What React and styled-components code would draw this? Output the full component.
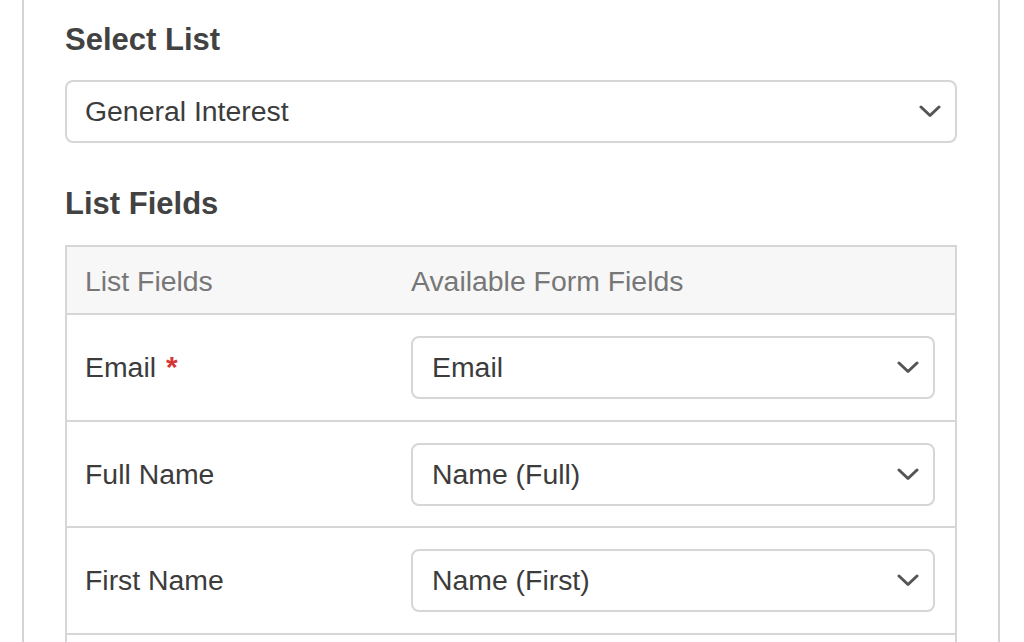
import React from "react";
import styled, { createGlobalStyle } from "styled-components";

const Global = createGlobalStyle`
  html, body { margin: 0; padding: 0; background: #ffffff; overflow: hidden; }
  body { font-family: "Liberation Sans", Arial, sans-serif; }
`;

const Panel = styled.div`
  box-sizing: border-box;
  margin-left: 22px;
  width: 978px;
  height: 642px;
  border-left: 2px solid #d4d4d4;
  border-right: 2px solid #d4d4d4;
  padding: 22px 41px 0 41px;
`;

const Heading = styled.h2`
  margin: ${(p) => p.$top || 0}px 0 0 0;
  font-size: 31px;
  line-height: 36px;
  font-weight: 700;
  color: #424242;
`;

const SelectBox = styled.div`
  box-sizing: border-box;
  display: flex;
  align-items: center;
  justify-content: space-between;
  height: 63px;
  margin-top: ${(p) => p.$top || 0}px;
  padding: 0 14px 0 ${(p) => p.$pad || 18}px;
  border: 2px solid #d6d6d6;
  border-radius: 8px;
  background: #ffffff;
  font-size: 28.4px;
  color: #3c3c3c;
`;

const Chevron = () => (
  <svg width="22" height="13" viewBox="0 0 22 13" fill="none">
    <polyline
      points="2,2 11,10.5 20,2"
      stroke="#555555"
      strokeWidth="3"
      strokeLinecap="round"
      strokeLinejoin="round"
    />
  </svg>
);

const Table = styled.div`
  margin-top: 23px;
  border: 2px solid #d6d6d6;
  border-bottom: none;
`;

const HeadRow = styled.div`
  display: grid;
  grid-template-columns: 324px 1fr;
  align-items: center;
  height: 66px;
  padding-top: 2px;
  box-sizing: border-box;
  background: #f7f7f7;
  font-size: 28.4px;
  color: #777777;
`;

const Row = styled.div`
  display: grid;
  grid-template-columns: 324px 1fr;
  align-items: center;
  border-top: 2px solid #d6d6d6;
  padding: 20.85px 0;
  font-size: 28.4px;
  color: #3c3c3c;
`;

const RowStub = styled.div`
  border-top: 2px solid #d6d6d6;
  height: 40px;
`;

const LabelCell = styled.div`
  padding-left: 18px;
`;

const FieldCell = styled.div`
  padding: 0 20px;
`;

const Required = styled.span`
  color: #d63638;
  font-weight: 700;
  font-size: 30px;
  margin-left: 10px;
`;

const rows = [
  { label: "Email", required: true, value: "Email" },
  { label: "Full Name", value: "Name (Full)" },
  { label: "First Name", value: "Name (First)" },
];

export default function App() {
  return (
    <>
      <Global />
      <Panel>
        <Heading>Select List</Heading>
        <SelectBox $top={22}>
          <span>General Interest</span>
          <Chevron />
        </SelectBox>
        <Heading $top={43}>List Fields</Heading>
        <Table>
          <HeadRow>
            <LabelCell>List Fields</LabelCell>
            <FieldCell>Available Form Fields</FieldCell>
          </HeadRow>
          {rows.map((r) => (
            <Row key={r.label}>
              <LabelCell>
                {r.label}
                {r.required && <Required>*</Required>}
              </LabelCell>
              <FieldCell>
                <SelectBox $pad={19}>
                  <span>{r.value}</span>
                  <Chevron />
                </SelectBox>
              </FieldCell>
            </Row>
          ))}
          <RowStub />
        </Table>
      </Panel>
    </>
  );
}
